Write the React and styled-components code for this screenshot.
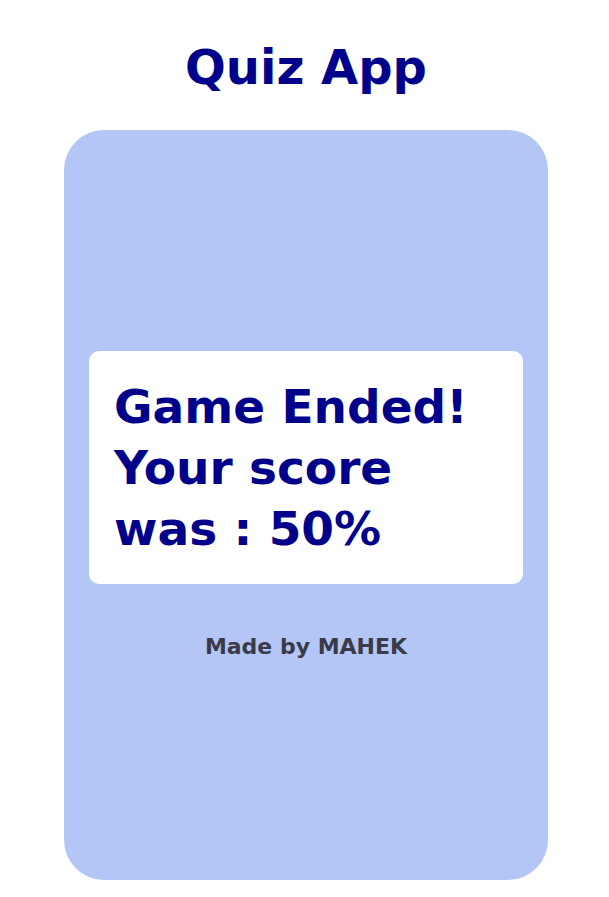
import styled, { createGlobalStyle } from 'styled-components'

const GlobalStyle = createGlobalStyle`
  body {
    margin: 0;
    background: #ffffff;
    font-family: "DejaVu Sans", "Open Sans", sans-serif;
  }
`

const Page = styled.div`
  display: flex;
  flex-direction: column;
  align-items: center;
  padding: 36px 0 0 3px;
`

const Title = styled.h1`
  margin: 0 0 32px;
  color: #00008b;
  font-size: 48px;
  font-weight: 700;
  line-height: 62px;
`

const Card = styled.div`
  box-sizing: border-box;
  display: flex;
  flex-direction: column;
  justify-content: center;
  align-items: center;
  width: 484px;
  height: 750px;
  padding: 0 25px;
  background-color: #b3c6f6;
  border-radius: 40px;
`

const ResultBox = styled.div`
  box-sizing: border-box;
  width: 100%;
  padding: 25px 25px 25px;
  background-color: #ffffff;
  border-radius: 10px;

  h2 {
    margin: 0;
    color: #00008b;
    font-size: 47px;
    font-weight: 700;
    line-height: 61px;
  }
`

const Footer = styled.p`
  margin: 50px 0 0;
  color: #3a3a48;
  font-size: 22px;
  font-weight: 700;
  line-height: 26px;
`

const App = () => {
  const score = 50

  return (
    <>
      <GlobalStyle />
      <Page>
        <Title>Quiz App</Title>
        <Card>
          <ResultBox>
            <h2>Game Ended! Your score was : {score}%</h2>
          </ResultBox>
          <Footer>Made by MAHEK</Footer>
        </Card>
      </Page>
    </>
  )
}

export default App
